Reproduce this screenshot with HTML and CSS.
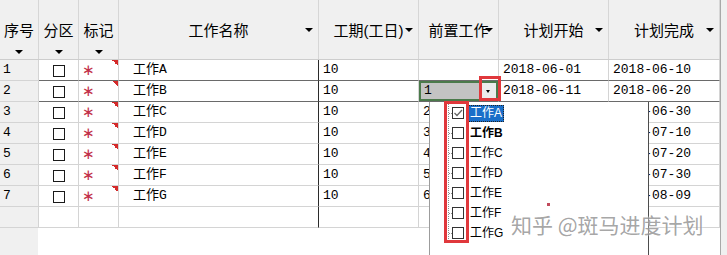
FILE: index.html
```html
<!DOCTYPE html>
<html lang="zh-CN">

<head>
  <meta charset="UTF-8">
  <meta name="viewport" content="width=device-width, initial-scale=1.0">
  <title>工作列表</title>
  <link rel="stylesheet" href="styles.css">
</head>

<body>
  <div class="sheet">
    <div class="grid">
      <div class="head">
        <div class="hc c-no stack"><span class="hl">序号</span><i class="arrow"></i></div>
        <div class="hc c-part stack"><span class="hl">分区</span><i class="arrow"></i></div>
        <div class="hc c-mark stack"><span class="hl">标记</span><i class="arrow"></i></div>
        <div class="hc c-name"><span class="hl">工作名称</span><i class="arrow"></i></div>
        <div class="hc c-dur"><span class="hl">工期(工日)</span><i class="arrow"></i></div>
        <div class="hc c-pre"><span class="hl">前置工作</span><i class="arrow"></i></div>
        <div class="hc c-start"><span class="hl">计划开始</span><i class="arrow"></i></div>
        <div class="hc c-end"><span class="hl">计划完成</span><i class="arrow"></i></div>
      </div>

      <div class="row pre-cur">
        <div class="c c-no">1</div>
        <div class="c c-part"><span class="box"></span></div>
        <div class="c c-mark"><span class="star">∗</span></div>
        <div class="c c-name">工作A</div>
        <div class="c c-dur">10</div>
        <div class="c c-pre"></div>
        <div class="c c-start">2018-06-01</div>
        <div class="c c-end">2018-06-10</div>
      </div>
      <div class="row cur">
        <div class="c c-no">2</div>
        <div class="c c-part"><span class="box"></span></div>
        <div class="c c-mark"><span class="star">∗</span></div>
        <div class="c c-name">工作B</div>
        <div class="c c-dur">10</div>
        <div class="c c-pre edit">
          <div class="editor"><span class="val">1</span><span class="drop-btn"><i class="tiny"></i></span></div>
        </div>
        <div class="c c-start">2018-06-11</div>
        <div class="c c-end">2018-06-20</div>
      </div>
      <div class="row">
        <div class="c c-no">3</div>
        <div class="c c-part"><span class="box"></span></div>
        <div class="c c-mark"><span class="star">∗</span></div>
        <div class="c c-name">工作C</div>
        <div class="c c-dur">10</div>
        <div class="c c-pre">2</div>
        <div class="c c-start">2018-06-21</div>
        <div class="c c-end">2018-06-30</div>
      </div>
      <div class="row">
        <div class="c c-no">4</div>
        <div class="c c-part"><span class="box"></span></div>
        <div class="c c-mark"><span class="star">∗</span></div>
        <div class="c c-name">工作D</div>
        <div class="c c-dur">10</div>
        <div class="c c-pre">3</div>
        <div class="c c-start">2018-07-01</div>
        <div class="c c-end">2018-07-10</div>
      </div>
      <div class="row">
        <div class="c c-no">5</div>
        <div class="c c-part"><span class="box"></span></div>
        <div class="c c-mark"><span class="star">∗</span></div>
        <div class="c c-name">工作E</div>
        <div class="c c-dur">10</div>
        <div class="c c-pre">4</div>
        <div class="c c-start">2018-07-11</div>
        <div class="c c-end">2018-07-20</div>
      </div>
      <div class="row">
        <div class="c c-no">6</div>
        <div class="c c-part"><span class="box"></span></div>
        <div class="c c-mark"><span class="star">∗</span></div>
        <div class="c c-name">工作F</div>
        <div class="c c-dur">10</div>
        <div class="c c-pre">5</div>
        <div class="c c-start">2018-07-21</div>
        <div class="c c-end">2018-07-30</div>
      </div>
      <div class="row">
        <div class="c c-no">7</div>
        <div class="c c-part"><span class="box"></span></div>
        <div class="c c-mark"><span class="star">∗</span></div>
        <div class="c c-name">工作G</div>
        <div class="c c-dur">10</div>
        <div class="c c-pre">6</div>
        <div class="c c-start">2018-07-31</div>
        <div class="c c-end">2018-08-09</div>
      </div>
      <!-- empty row for new entries -->
      <div class="row">
        <div class="c c-no"></div>
        <div class="c c-part"></div>
        <div class="c c-mark plain"></div>
        <div class="c c-name"></div>
        <div class="c c-dur"></div>
        <div class="c c-pre"></div>
        <div class="c c-start"></div>
        <div class="c c-end"></div>
      </div>
    </div>
    <div class="side"></div>

    <!-- predecessor picker popup -->
    <div class="drop">
      <div class="opts">
        <div class="opt on">
          <span class="stub"></span>
          <span class="cb"><svg width="10" height="10" viewBox="0 0 10 10"><polyline points="1.5,5 4,7.5 9,2" fill="none" stroke="#666" stroke-width="1.3"/></svg></span>
          <span class="lab">工作A</span>
        </div>
        <div class="opt bold"><span class="stub"></span><span class="cb"></span><span class="lab">工作B</span></div>
        <div class="opt"><span class="stub"></span><span class="cb"></span><span class="lab">工作C</span></div>
        <div class="opt"><span class="stub"></span><span class="cb"></span><span class="lab">工作D</span></div>
        <div class="opt"><span class="stub"></span><span class="cb"></span><span class="lab">工作E</span></div>
        <div class="opt"><span class="stub"></span><span class="cb"></span><span class="lab">工作F</span></div>
        <div class="opt"><span class="stub"></span><span class="cb"></span><span class="lab">工作G</span></div>
      </div>
    </div>

    <div class="hint hint-btn"></div>
    <div class="hint hint-checks"></div>
    <div class="dot"></div>
    <div class="wm">知乎 @斑马进度计划</div>
  </div>
</body>

</html>
```

FILE: styles.css
```css
body {
  margin: 0;
  background: #fff;
  font-family: "Liberation Mono", "Noto Sans CJK SC", monospace;
  font-size: 13px;
  color: #000;
  overflow: hidden;
}

.sheet {
  position: relative;
  display: flex;
  height: 255px;
}

.grid {
  width: 720px;
  background: linear-gradient(to right, #f0f0f0 38px, #fff 38px);
}

.side {
  flex: 1;
  background: #f0f0f0;
  border-left: 1px solid #a8a8a8;
}

/* column widths */
.c-no { width: 39px; }
.c-part { width: 40px; }
.c-mark { width: 40px; }
.c-name { width: 200px; }
.c-dur { width: 100px; }
.c-pre { width: 80px; }
.c-start { width: 110px; }
.c-end { width: 111px; }

/* header */
.head {
  display: flex;
  height: 60px;
  box-sizing: border-box;
  border-bottom: 1px solid #cdcdcd;
  background: #f0f0f0;
}

.hc {
  display: grid;
  box-sizing: border-box;
  border-right: 1px solid #d6d6d6;
  font-family: "Liberation Sans", "Noto Sans CJK SC", sans-serif;
  font-size: 15px;
}

.hc > * {
  grid-area: 1 / 1;
}

.hl {
  align-self: center;
  justify-self: center;
  white-space: nowrap;
}

.arrow {
  width: 0;
  height: 0;
  border-left: 4px solid transparent;
  border-right: 4px solid transparent;
  border-top: 4px solid #000;
  justify-self: end;
  align-self: center;
  margin-right: 5px;
}

.stack .arrow {
  justify-self: center;
  align-self: end;
  margin: 0 0 5px;
}

/* rows */
.row {
  display: flex;
  height: 21px;
}

.c {
  box-sizing: border-box;
  border-right: 1px solid #d4d4d4;
  border-bottom: 1px solid #d4d4d4;
  padding-left: 4px;
  line-height: 20px;
  white-space: nowrap;
  overflow: hidden;
}

.c.c-no {
  background: #f0f0f0;
  padding-left: 3px;
}

.c.c-part {
  display: flex;
  align-items: center;
  justify-content: center;
  padding: 1px 0 0;
}

.box {
  width: 12px;
  height: 12px;
  box-sizing: border-box;
  border: 1px solid #1a1a1a;
  background: #fff;
}

.c.c-mark {
  background: linear-gradient(to bottom left, #d42a2a 50%, transparent 50%) right top / 6px 6px no-repeat;
  padding-left: 3px;
}

.c.c-mark.plain {
  background: none;
}

.star {
  color: #c2304a;
  font-family: "DejaVu Sans", sans-serif;
  font-size: 15px;
}

.c.c-name {
  padding-left: 14px;
  border-right-color: #2b2b2b;
}

.pre-cur .c:not(.c-no),
.cur .c:not(.c-no) {
  border-bottom-color: #6a6a6a;
}

/* inline editor in the current row */
.c.edit {
  padding: 0;
}

.editor {
  display: flex;
  height: 20px;
  box-sizing: border-box;
  border: 2px solid #4b7a4b;
  background: #c3c3c3;
  line-height: 16px;
}

.val {
  flex: 1;
  padding-left: 3px;
}

.drop-btn {
  width: 17px;
  display: flex;
  align-items: center;
  justify-content: center;
  background: #ececec;
}

.tiny {
  width: 0;
  height: 0;
  border-left: 2.5px solid transparent;
  border-right: 2.5px solid transparent;
  border-top: 3px solid #000;
}

/* popup list */
.drop {
  position: absolute;
  left: 429px;
  top: 102px;
  width: 220px;
  height: 153px;
  box-sizing: border-box;
  border-left: 1px solid #9c9c9c;
  border-right: 1px solid #4d4d4d;
  background: #fff;
  padding-top: 1px;
  font-family: "Liberation Sans", "Noto Sans CJK SC", sans-serif;
  font-size: 12px;
}

.opts {
  margin-left: 18px;
  border-left: 1px dotted #8c8c8c;
  width: max-content;
}

.opt {
  display: flex;
  align-items: center;
  height: 20px;
}

.stub {
  width: 3px;
  border-top: 1px dotted #8c8c8c;
}

.cb {
  width: 12px;
  height: 12px;
  box-sizing: border-box;
  border: 1px solid #333;
  margin-right: 4px;
  display: flex;
  align-items: center;
  justify-content: center;
}

.lab {
  padding: 0 1px;
  line-height: 15px;
  border: 1px dotted transparent;
}

.opt.on .lab {
  background: #1a6fc9;
  color: #fff;
  border-color: #222;
}

.opt.bold .lab {
  font-weight: bold;
}

/* red annotation frames */
.hint {
  position: absolute;
  box-sizing: border-box;
  border: 3px solid #e0383c;
}

.hint-btn {
  left: 479px;
  top: 76px;
  width: 22px;
  height: 25px;
}

.hint-checks {
  left: 444px;
  top: 101px;
  width: 25px;
  height: 142px;
}

.dot {
  position: absolute;
  left: 547px;
  top: 203px;
  width: 3px;
  height: 3px;
  background: #c14a5c;
}

.wm {
  position: absolute;
  left: 511px;
  top: 213px;
  font-family: "Noto Sans CJK SC", sans-serif;
  font-size: 21px;
  line-height: 22px;
  color: rgba(115, 115, 115, 0.65);
  text-shadow: 0 0 2px #fff;
  white-space: nowrap;
}
```
